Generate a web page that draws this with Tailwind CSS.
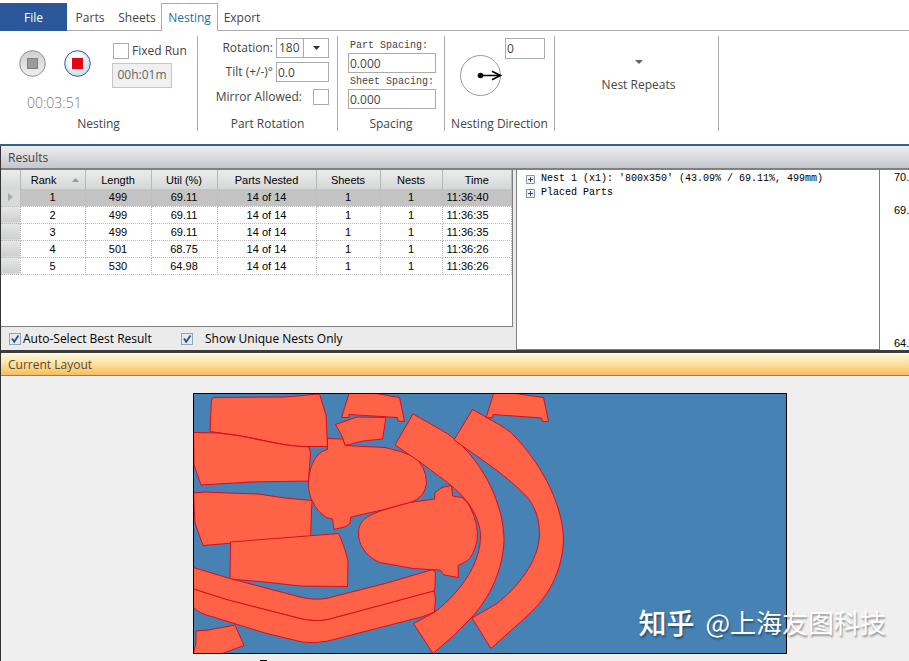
<!DOCTYPE html>
<html lang="en">
<head>
<meta charset="utf-8">
<title>Nesting</title>
<script src="https://cdn.jsdelivr.net/npm/@tailwindcss/browser@4"></script>
</head>
<body class="min-h-screen flex flex-col bg-[#efefef] font-['Open_Sans',sans-serif] text-[12px] leading-4 text-[#444] overflow-hidden">

<nav class="flex items-stretch h-[31px] pt-[3px] bg-white shadow-[inset_0_-1px_0_#ababab]">
  <a href="#" class="w-[67px] pt-[2px] flex items-center justify-center bg-[#2b579a] text-white">File</a>
  <a href="#" class="w-[46px] pt-[2px] flex items-center justify-center">Parts</a>
  <a href="#" class="w-12 pt-[2px] flex items-center justify-center whitespace-nowrap">Sheets</a>
  <a href="#" class="w-[57px] flex items-center justify-center bg-white border border-b-0 border-[#ababab] text-[#1e6fa5]">Nesting</a>
  <a href="#" class="w-12 pt-[2px] flex items-center justify-center">Export</a>
</nav>

<header class="flex bg-white pt-[5px] pb-[13px] border-b-2 border-[#34608a]">
  <section class="w-[198px] h-[95px] flex flex-col border-r border-[#ababab]">
    <div class="flex-1 flex pl-[19px]">
      <div class="w-[93px] pt-[14px]">
        <div class="flex gap-[18px]">
          <button aria-label="Pause" class="size-[27px]">
            <svg viewBox="0 0 27 27" class="size-full"><defs><linearGradient id="g1" x2="0" y2="1"><stop stop-color="#d0d0d0"/><stop offset="1" stop-color="#efefef"/></linearGradient></defs><circle cx="13.5" cy="13.5" r="12.8" fill="url(#g1)" stroke="#8c8c8c"/><rect x="8.5" y="8.5" width="10" height="10" fill="#9b9b9b" stroke="#808080"/></svg>
          </button>
          <button aria-label="Stop" class="size-[27px]">
            <svg viewBox="0 0 27 27" class="size-full"><defs><radialGradient id="g2" cx=".45" cy=".4"><stop offset=".5" stop-color="#fff"/><stop offset="1" stop-color="#cfe3f5"/></radialGradient></defs><circle cx="13.5" cy="13.5" r="12.8" fill="url(#g2)" stroke="#3c5688"/><rect x="8" y="8" width="11" height="11" fill="#e30613"/></svg>
          </button>
        </div>
        <output class="block mt-[18px] pl-2 text-[14px] font-light text-[#777]">00:03:51</output>
      </div>
      <div class="pt-[7px]">
        <label class="flex items-center gap-[3px] whitespace-nowrap"><input type="checkbox" class="appearance-none size-4 ml-px border border-[#ababab] bg-white">Fixed Run</label>
        <input aria-label="Run time" value="00h:01m" disabled class="mt-1 w-[60px] h-[25px] pb-[2px] text-center border border-[#c6c6c6] bg-[#f0f0f0] text-[#666]">
      </div>
    </div>
    <h2 class="h-4 leading-[18px] text-center">Nesting</h2>
  </section>

  <section class="w-[140px] h-[95px] flex flex-col border-r border-[#ababab]">
    <div class="flex-1 flex flex-col gap-1 pt-[2px] pr-2">
      <div class="flex items-center justify-end gap-[3px] h-5">
        <label for="rot">Rotation:</label>
        <span class="relative w-[53px] h-5">
          <select id="rot" class="appearance-none w-full h-full px-[2px] border border-[#ababab] bg-white"><option>180</option></select>
          <span class="absolute right-0 top-0 h-5 w-[26px] border-l border-[#ababab] flex items-center justify-center pointer-events-none"><svg class="w-[7px] h-1" viewBox="0 0 7 4"><path d="M0 0h7L3.500 4z" fill="#333"/></svg></span>
        </span>
      </div>
      <div class="flex items-center justify-end gap-[3px] h-5">
        <label for="tilt">Tilt (+/-)°</label>
        <input id="tilt" value="0.0" class="w-[53px] h-5 px-px border border-[#ababab] bg-white">
      </div>
      <div class="flex items-center justify-end gap-[11px] h-[22px]">
        <label for="mir">Mirror Allowed:</label>
        <input id="mir" type="checkbox" class="appearance-none size-4 border border-[#ababab] bg-white">
      </div>
    </div>
    <h2 class="h-4 leading-[18px] text-center">Part Rotation</h2>
  </section>

  <section class="w-[107px] h-[95px] flex flex-col border-r border-[#ababab]">
    <div class="flex-1 flex flex-col pt-px pl-[10px] pr-2">
      <label for="ps" class="h-4 pl-[2px] font-['Liberation_Mono',monospace] text-[10px] leading-[18px]">Part Spacing:</label>
      <input id="ps" value="0.000" class="w-full h-5 px-px border border-[#ababab] bg-white">
      <label for="ss" class="h-4 pl-[2px] font-['Liberation_Mono',monospace] text-[10px] leading-[18px]">Sheet Spacing:</label>
      <input id="ss" value="0.000" class="w-full h-5 px-px border border-[#ababab] bg-white">
    </div>
    <h2 class="h-4 leading-[18px] text-center">Spacing</h2>
  </section>

  <section class="w-[110px] h-[95px] flex flex-col border-r border-[#ababab]">
    <div class="flex-1 flex items-start gap-[2px] pt-[2px] pl-[15px]">
      <svg class="mt-4 w-[43px] h-[43px]" viewBox="0 0 43 43" fill="none"><circle cx="20.500" cy="21.500" r="20" stroke="#999"/><circle cx="20.500" cy="21.500" r="2.800" fill="#000"/><path d="M20 21.500H40M32 17.200L40.500 21.500L32 25.800" stroke="#000" stroke-width="1.600"/></svg>
      <input aria-label="Direction" value="0" class="w-10 h-[21px] px-px border border-[#ababab] bg-white">
    </div>
    <h2 class="h-4 leading-[18px] text-center whitespace-nowrap">Nesting Direction</h2>
  </section>

  <section class="w-[164px] h-[95px] border-r border-[#ababab]">
    <button class="w-full pt-6 pl-1 flex flex-col items-center gap-[13px]">
      <svg class="w-2 h-1" viewBox="0 0 8 4"><path d="M0 0h8L4 4z" fill="#666"/></svg>
      Nest Repeats
    </button>
  </section>
</header>

<section class="border-l border-[#333] bg-[#ebebeb]">
  <h2 class="h-6 pl-[7px] leading-6 bg-linear-to-b from-[#eeeef0] via-[#dcdadf] to-[#c3c7ce] border-b-2 border-[#808080]">Results</h2>
  <div class="flex h-[180px]">
    <div class="w-[512px] flex flex-col text-black">
      <div class="flex-1 bg-white border-r border-b border-[#808080]">
        <table class="w-full table-fixed border-collapse font-['Liberation_Sans',sans-serif] text-[11px] text-center">
          <colgroup><col class="w-[19px]"><col class="w-[65px]"><col class="w-[66px]"><col class="w-[66px]"><col class="w-[99px]"><col class="w-16"><col class="w-[62px]"><col></colgroup>
          <thead>
            <tr class="h-[19px] bg-linear-to-b from-[#ececec] to-[#d5d8d6] *:border-r *:border-[#b8b8b8] *:font-normal *:p-0">
              <th aria-label="Row"></th>
              <th><span class="flex items-center justify-end gap-[15px] pr-[6px]">Rank<svg class="w-[7px] h-1" viewBox="0 0 7 4"><path d="M0 4h7L3.500 0z" fill="#999"/></svg></span></th>
              <th>Length</th><th>Util (%)</th><th>Parts Nested</th><th>Sheets</th><th>Nests</th><th>Time</th>
            </tr>
          </thead>
          <tbody class="*:h-[17px]">
            <tr class="bg-[#c3c3c3] *:p-0 *:border-r *:border-b *:border-dotted *:border-[#bbb]"><td class="bg-[#d8dad9]"><svg class="w-[5px] h-2 mx-auto" viewBox="0 0 5 8"><path d="M0 0v8L5 4z" fill="#aaa"/></svg></td><td>1</td><td>499</td><td>69.11</td><td>14 of 14</td><td>1</td><td>1</td><td class="text-left"><span class="pl-1">11:36:40</span></td></tr>
            <tr class="*:p-0 *:border-r *:border-b *:border-dotted *:border-[#bbb]"><td class="bg-linear-to-b from-[#e6e6e6] to-[#cdcfce]"></td><td>2</td><td>499</td><td>69.11</td><td>14 of 14</td><td>1</td><td>1</td><td class="text-left"><span class="pl-1">11:36:35</span></td></tr>
            <tr class="*:p-0 *:border-r *:border-b *:border-dotted *:border-[#bbb]"><td class="bg-linear-to-b from-[#e6e6e6] to-[#cdcfce]"></td><td>3</td><td>499</td><td>69.11</td><td>14 of 14</td><td>1</td><td>1</td><td class="text-left"><span class="pl-1">11:36:35</span></td></tr>
            <tr class="*:p-0 *:border-r *:border-b *:border-dotted *:border-[#bbb]"><td class="bg-linear-to-b from-[#e6e6e6] to-[#cdcfce]"></td><td>4</td><td>501</td><td>68.75</td><td>14 of 14</td><td>1</td><td>1</td><td class="text-left"><span class="pl-1">11:36:26</span></td></tr>
            <tr class="*:p-0 *:border-r *:border-b *:border-dotted *:border-[#bbb]"><td class="bg-linear-to-b from-[#e6e6e6] to-[#cdcfce]"></td><td>5</td><td>530</td><td>64.98</td><td>14 of 14</td><td>1</td><td>1</td><td class="text-left"><span class="pl-1">11:36:26</span></td></tr>
          </tbody>
        </table>
      </div>
      <div class="h-[23px] flex items-center pl-2">
        <label class="w-[172px] flex items-center gap-[2px] whitespace-nowrap"><span class="relative flex"><input type="checkbox" checked class="peer appearance-none size-3 border border-[#8da5bd] bg-[#e3ebf4]"><svg class="absolute inset-0 size-3 hidden peer-checked:block pointer-events-none" viewBox="0 0 12 12"><path d="M3 5.500L5.200 8.800L9.500 2.500" fill="none" stroke="#3a4f76" stroke-width="1.800"/></svg></span>Auto-Select Best Result</label>
        <label class="flex items-center gap-3 whitespace-nowrap"><span class="relative flex"><input type="checkbox" checked class="peer appearance-none size-3 border border-[#8da5bd] bg-[#e3ebf4]"><svg class="absolute inset-0 size-3 hidden peer-checked:block pointer-events-none" viewBox="0 0 12 12"><path d="M3 5.500L5.200 8.800L9.500 2.500" fill="none" stroke="#3a4f76" stroke-width="1.800"/></svg></span>Show Unique Nests Only</label>
      </div>
    </div>
    <ul class="ml-[3px] w-[364px] pt-[2px] pl-[9px] bg-white border-x border-b border-[#808080] font-['Liberation_Mono',monospace] text-[10px] leading-[14px] text-black whitespace-nowrap">
      <li class="flex items-center gap-[6px]"><button aria-label="Expand" class="size-[9px]"><svg viewBox="0 0 9 9" class="size-full"><path d="M.5.5h8v8h-8z" fill="#eef2f8" stroke="#8593a8"/><path d="M2 4.500h5M4.500 2v5" stroke="#2c4a80"/></svg></button>Nest 1 (x1): '800x350' (43.09% / 69.11%, 499mm)</li>
      <li class="flex items-center gap-[6px]"><button aria-label="Expand" class="size-[9px]"><svg viewBox="0 0 9 9" class="size-full"><path d="M.5.5h8v8h-8z" fill="#eef2f8" stroke="#8593a8"/><path d="M2 4.500h5M4.500 2v5" stroke="#2c4a80"/></svg></button>Placed Parts</li>
    </ul>
    <div class="flex-1 flex flex-col bg-white pl-[14px] font-['Liberation_Sans',sans-serif] text-[11px] leading-[14px] text-black overflow-hidden">
      <span>70.</span><span class="mt-[19px]">69.</span><span class="mt-auto">64.</span>
    </div>
  </div>
</section>

<main class="flex-1 relative border-l border-[#333]">
  <h2 class="h-[26px] pl-[7px] leading-[23px] border-t-3 border-t-[#3c3c3c] border-b border-b-[#94805c] bg-linear-to-b from-[#fffbe0] via-[#fce0a0] to-[#f6bd5c] text-[#5a4a30]">Current Layout</h2>
  <div class="pt-[17px] pl-48 relative">
    <svg class="w-[594px] h-[261px] bg-[#4682b4]" viewBox="193 393 594 261">
      <g fill="#ff6347" stroke="#dc0c1c" stroke-width="1" stroke-linejoin="round">
        <path d="M211.500 400Q212 397.500 215 397.500L285 397L319.500 394L326 415L327.500 446.500L302 446.500C278 445 262 439 235 435L210 431.500Z"/>
        <path d="M193.500 432.500L217 433C252 436 275 446 309 447L310.500 453L308.500 481L251 482L201 485L194 465Z"/>
        <path d="M193.500 493L205 492L228 493L258 494L285 498L312 500.500L310.500 536.500L203 545.500L195 523Z"/>
        <path d="M230.500 542L338.500 533.500C343 543 347 555 348 562L347.500 586.500L300 586L265 582L230 579Z"/>
        <path d="M193.500 567.500L230 578.500L298 596.500Q315 601 328 598L385 583.500L433 569.500L435.500 573L435 588L434 591L328 619.500Q317 622 302 619L228 600L193.500 589Z"/>
        <path d="M193.500 589L228 600L302 619Q317 622 328 619.500L434 591L435.500 598L434.500 612L423 616.500L328 641Q315 644 302 642L265 633L205 614.500Q196 611 193.500 607Z"/>
        <path d="M193.500 653.500L196 643V631L208 630L235 625L244 645.500L222 653.500Z"/>
        <path d="M349 393.500H376L399.500 397.500L404.500 421.500L398 421L397.500 417.500L349 414.500V417.500H341.500Z"/>
        <path d="M335.500 424.500L357 417L386 417.500L382.500 439L363 441L345 445.500L341.500 435Z"/>
        <path d="M327.500 438.500L343 439L345 445.500L385 447.500Q402 451 413 456.500Q426 465 426.500 483Q425 498 410 502.500L380 510.500L351 517L350 523L346 526.500L334 529.500L332.500 519L326.500 517.500C314 510 308 495 308.500 483C309 466 316 452 327.500 449.500Z"/>
        <path d="M434.500 499L435 492.500L442 487.500L451.500 485.500L452.500 496L462 497.500Q468 502 470 507Q479 524 477 541Q474 555 467 561L458 565.500L458.500 577.500L444 575L440 570L413 568.500L380 562.500C366 557 358 544 358.500 533C359 520 366 516 385 509.500L410 502.500Z"/>
        <path d="M413 414L436 427Q448 433 457 441C492 473 504 515 504 540C503 570 490 597 472 617Q455 636 433 653.500L413.500 623.500L435 612C465 588 481 560 480.500 535C479 510 460 491 440 477L420 462L395 445Z"/>
        <path d="M472.500 409.500L500 425Q511 431 519 441C550 476 563 513 563.500 540C562 580 540 605 526 617L491 648.500L472 618L497 603.500C524 582 540 555 539.500 533C539 513 532 500 519 489C500 471 475 455 454 440Z"/>
        <path d="M493.500 393.500H515L543.500 397.500L548.500 421.500H542.500L541.500 418L493 414.500L492.500 417.500L486 418Z"/>
      </g>
      <path d="M193.500 393.500H786.500V653.500H193.500Z" fill="none" stroke="#000"/>
    </svg>
    <p class="absolute right-[23px] bottom-4 flex items-center gap-[11px] font-['Noto_Sans_CJK_SC',sans-serif] text-[26px] leading-8 text-white whitespace-nowrap [text-shadow:1px_2px_2px_rgb(0_0_0/0.4)]"><strong class="text-[28px] font-medium">知乎</strong><span>@上海友图科技</span></p>
  </div>
  <div class="absolute left-[259px] bottom-0 w-[7px] h-px bg-black"></div>
</main>
</body>
</html>
